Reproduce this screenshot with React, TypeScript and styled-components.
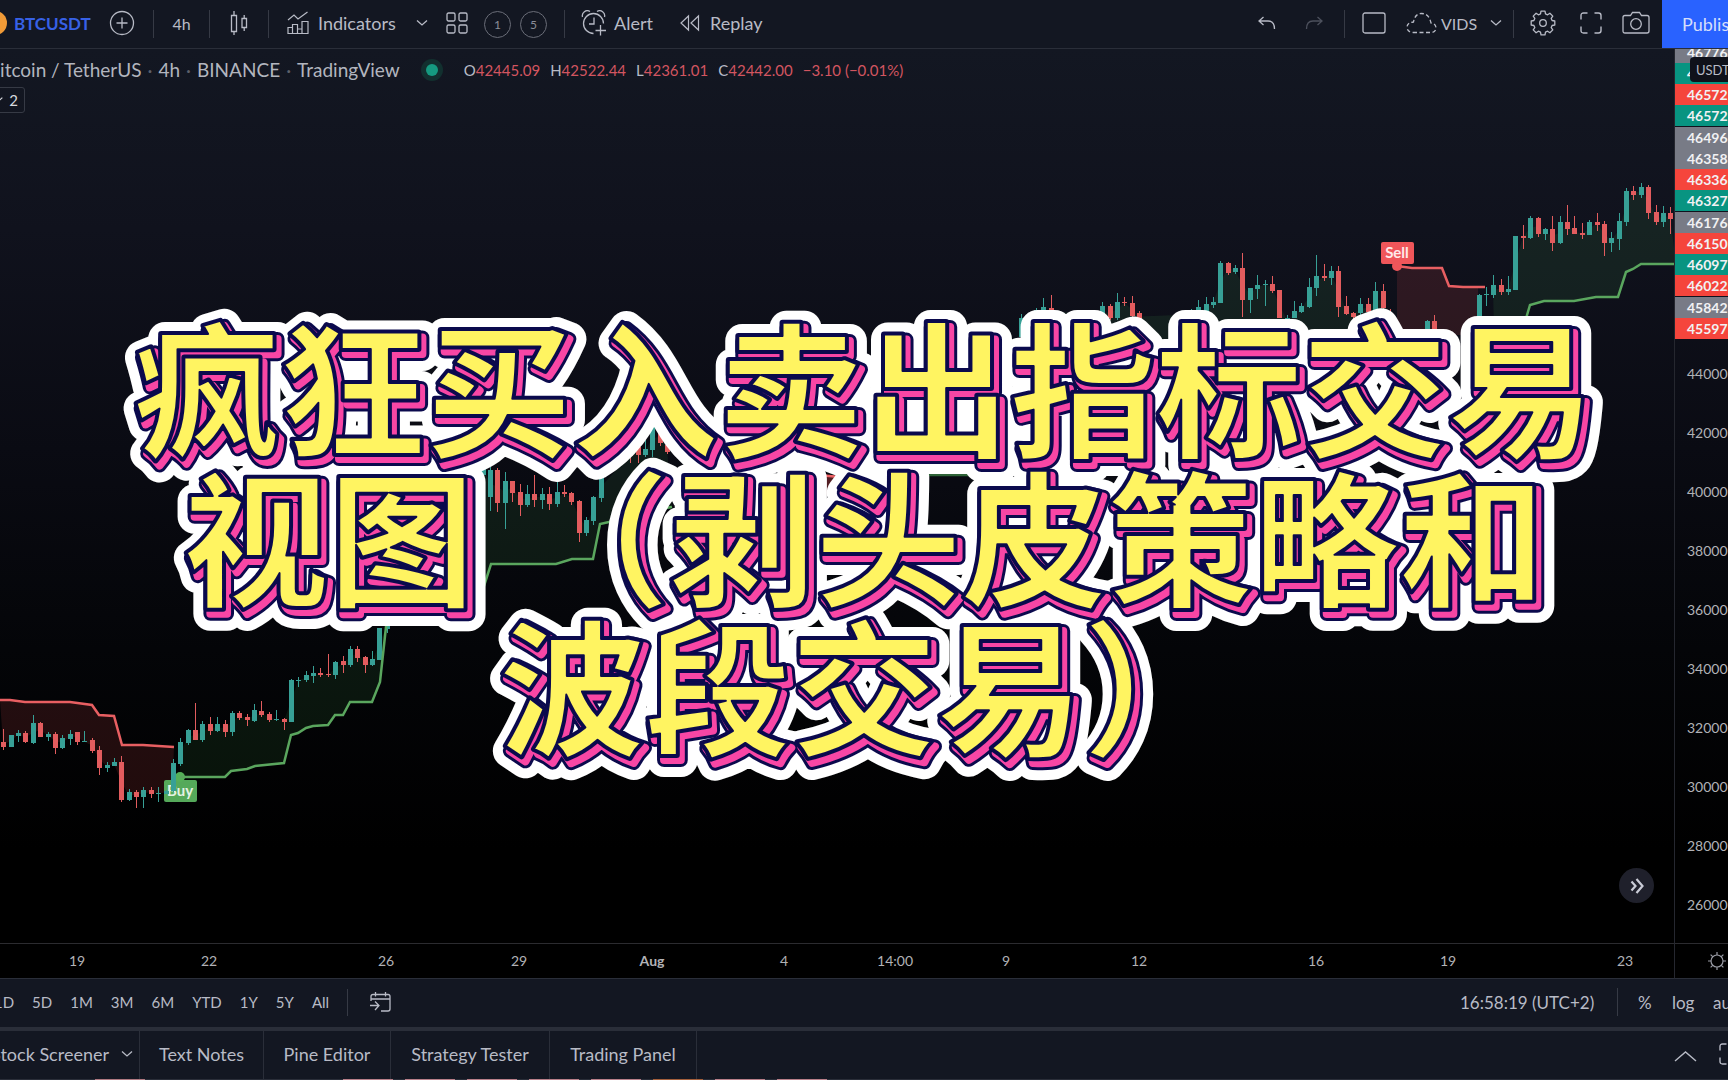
import React from "react";
import styled, { createGlobalStyle } from "styled-components";

const colors = {
  panel: "#131722",
  line: "#2a2e39",
  text: "#b8bbc6",
  dim: "#4c505c",
  up: "#37a096",
  down: "#e25c5e",
  blue: "#2962ff",
};

const GlobalStyle = createGlobalStyle`
  *, *::before, *::after { box-sizing: border-box; }
  html, body, #root { height: 100%; }
  body {
    margin: 0;
    overflow: hidden;
    background: #000;
    color: ${colors.text};
    font-family: Lato, "Open Sans", sans-serif;
    font-size: 16px;
  }
  button { font: inherit; color: inherit; background: none; border: 0; padding: 0; cursor: pointer; }
  ul, h1, p, dl, dd { margin: 0; padding: 0; list-style: none; }
`;

const Page = styled.div`
  position: relative;
  height: 100vh;
  display: flex;
  flex-direction: column;
  overflow: hidden;
`;

/* ---------- top toolbar ---------- */
const Toolbar = styled.header`
  flex: none;
  height: 49px;
  display: flex;
  justify-content: space-between;
  background: ${colors.panel};
  border-bottom: 1px solid ${colors.line};
  overflow: hidden;
`;
const ToolGroup = styled.div`
  display: flex;
  align-items: center;
  flex: none;
`;
const Tool = styled.button<{ $w: number; $start?: number; $gap?: number; $large?: boolean }>`
  flex: none;
  width: ${(p) => p.$w}px;
  height: 48px;
  && { padding-bottom: 2px; }
  padding-left: ${(p) => p.$start ?? 0}px;
  display: flex;
  align-items: center;
  justify-content: ${(p) => (p.$start === undefined ? "center" : "flex-start")};
  gap: ${(p) => p.$gap ?? 8}px;
  white-space: nowrap;
  font-size: ${(p) => (p.$large ? 18 : 16)}px;
  svg { flex: none; }
`;
const SymbolTool = styled(Tool)`
  color: #3761e6;
  font-weight: 700;
  font-size: 17px;
`;
const Coin = styled.span`
  flex: none;
  width: 24px;
  height: 24px;
  margin-left: -17px;
  border-radius: 50%;
  background: #f09a37;
`;
const Rule = styled.span<{ $h?: number }>`
  flex: none;
  width: 1px;
  height: ${(p) => p.$h ?? 28}px;
  background: #363a45;
`;
const Rounds = styled.div`
  display: flex;
  gap: 9px;
  padding: 0 17px 0 9px;
`;
const Round = styled.button`
  && { border: 1px solid #6a6d78; }
  width: 27px;
  height: 27px;
  border-radius: 50%;
  font-size: 12px;
  color: #8a8d98;
`;
const Publish = styled.button`
  && {
    background: ${colors.blue};
    color: #d5defb;
    padding-left: 20px;
  }
  width: 66px;
  height: 48px;
  overflow: hidden;
  text-align: left;
  white-space: nowrap;
  font-size: 18px;
`;

/* ---------- chart ---------- */
const Body = styled.main`
  flex: 1;
  min-height: 0;
  display: grid;
  grid-template-columns: minmax(0, 1fr) 54px;
  grid-template-rows: minmax(0, 1fr) 36px;
  background: linear-gradient(#131722 0, #10121d 180px, #0a0b13 400px, #040508 600px, #000 800px);
`;
const Pane = styled.section`
  position: relative;
  overflow: hidden;
`;
const ChartSvg = styled.svg`
  position: absolute;
  inset: 0;
  width: 100%;
  height: 100%;
`;
const Legend = styled.div`
  position: relative;
  display: flex;
  align-items: center;
  height: 42px;
  margin-left: -12px;
  white-space: nowrap;
`;
const LegendTitle = styled.p`
  display: flex;
  gap: 6px;
  padding-bottom: 2px;
  font-size: 19px;
  color: #b2b5be;
  i { font-style: normal; color: #5d606b; }
`;
const Status = styled.span`
  width: 12px;
  height: 12px;
  margin: 0 26px 0 26px;
  border-radius: 50%;
  background: #159a80;
  box-shadow: 0 0 0 5px #12302f;
`;
const Ohlc = styled.dl`
  display: flex;
  gap: 10px;
  font-size: 15px;
  div { display: flex; }
  dd { color: #d25560; }
`;
const Collapse = styled.button`
  && { border: 1px solid #363a45; padding: 0 6px 0 0; }
  position: relative;
  display: flex;
  align-items: center;
  justify-content: flex-end;
  gap: 6px;
  width: 34px;
  height: 26px;
  margin: -4px 0 0 -9px;
  border-radius: 3px;
  font-size: 15px;
  color: #d6d8de;
`;
const Jump = styled.button`
  && { background: #1f202b; }
  position: absolute;
  right: 20px;
  bottom: 40px;
  width: 35px;
  height: 35px;
  border-radius: 50%;
  display: grid;
  place-items: center;
`;
const PriceAxis = styled.aside`
  position: relative;
  overflow: hidden;
  border-left: 1px solid #25272f;
  font-size: 14px;
`;
const Badges = styled.ul`
  margin: -7px 0 5px -1px;
`;
const Badge = styled.li<{ $c: string; $split?: boolean }>`
  height: ${(p) => (p.$split ? 22 : 21)}px;
  border-top: ${(p) => (p.$split ? "1px solid #10121d" : "0")};
  padding-left: 13px;
  line-height: 21px;
  font-weight: 700;
  color: #f1f1f3;
  background: ${(p) => p.$c};
`;
const Tick = styled.li`
  height: 59px;
  padding-left: 12px;
  line-height: 59px;
  color: #b2b2b6;
`;
const Currency = styled.button`
  && { background: #0f111a; padding-left: 6px; }
  position: absolute;
  top: 8px;
  left: 15px;
  width: 52px;
  height: 25px;
  border-radius: 4px;
  text-align: left;
  font-size: 13px;
`;
const TimeAxis = styled.ul`
  display: flex;
  align-items: center;
  overflow: hidden;
  && { padding-bottom: 2px; }
  border-top: 1px solid #2b2b2f;
  border-bottom: 1px solid ${colors.line};
  font-size: 14px;
  color: #b2b2b6;
`;
const Time = styled.li<{ $gap: number; $bold?: boolean }>`
  flex: none;
  display: flex;
  justify-content: center;
  width: 0;
  margin-left: ${(p) => p.$gap}px;
  white-space: nowrap;
  font-weight: ${(p) => (p.$bold ? 700 : 400)};
`;
const Corner = styled.button`
  && {
    border-left: 1px solid #25272f;
    border-top: 1px solid #2b2b2f;
    border-bottom: 1px solid ${colors.line};
    padding-left: 32px;
  }
  overflow: hidden;
  display: flex;
  align-items: center;
`;

/* ---------- bottom bars ---------- */
const RangeBar = styled.footer`
  flex: none;
  height: 48px;
  padding-bottom: 2px;
  display: flex;
  justify-content: space-between;
  align-items: center;
  background: ${colors.panel};
  overflow: hidden;
`;
const Ranges = styled.div`
  display: flex;
  align-items: center;
  gap: 18px;
  margin-left: -6px;
  font-size: 15px;
`;
const CalendarButton = styled.button`
  display: flex;
  margin-left: 3px;
`;
const ScaleGroup = styled.div`
  display: flex;
  align-items: center;
  font-size: 17px;
`;
const ScaleButton = styled.button<{ $w: number }>`
  width: ${(p) => p.$w}px;
  overflow: hidden;
  text-align: left;
  white-space: nowrap;
`;
const Tabs = styled.nav`
  flex: none;
  height: 52px;
  display: flex;
  align-items: center;
  justify-content: space-between;
  border-top: 4px solid ${colors.line};
  background: ${colors.panel};
  overflow: hidden;
`;
const TabList = styled.div`
  display: flex;
`;
const Tab = styled.button<{ $w: number }>`
  && { border-right: 1px solid ${colors.line}; padding-bottom: 2px; }
  display: flex;
  align-items: center;
  justify-content: center;
  gap: 12px;
  width: ${(p) => p.$w}px;
  height: 48px;
  white-space: nowrap;
  font-size: 18px;
  svg { flex: none; }
`;
const FirstTab = styled(Tab)`
  justify-content: flex-end;
  && { padding-right: 6px; }
`;
const PanelButtons = styled.div`
  display: flex;
  align-items: center;
  gap: 22px;
  width: 54px;
`;
const Strip = styled.div`
  flex: none;
  display: flex;
  gap: 12px;
  height: 1px;
  padding-left: 95px;
  background: ${colors.line};
`;
const Sliver = styled.span<{ $c: string; $after?: number }>`
  width: 50px;
  margin-right: ${(p) => p.$after ?? 0}px;
  background: ${(p) => p.$c};
`;

/* ---------- headline ---------- */
const Headline = styled.h1`
  position: absolute;
  inset: 0;
  pointer-events: none;
  svg { display: block; width: 100%; height: 100%; }
  text {
    font-family: "Noto Sans CJK SC", sans-serif;
    font-size: 146px;
    font-weight: 700;
    text-anchor: middle;
  }
`;

/* ---------- icons ---------- */
type IconProps = { w: number; h?: number; color?: string; sw?: number; children: React.ReactNode };
const Icon = ({ w, h = w, color = "currentColor", sw = 1, children }: IconProps) => (
  <svg width={w} height={h} viewBox={`0 0 ${w} ${h}`} fill="none" stroke={color} strokeWidth={sw} aria-hidden="true">
    {children}
  </svg>
);
const Chevron = () => (
  <Icon w={12} h={8} sw={1.3}><path d="M1 1.5l5 4.5 5-4.5" /></Icon>
);
const Corners = () => (
  <Icon w={22} sw={1.4}>
    <path d="M1 7.500V3.500Q1 1 3.500 1H7.500M14.500 1h4Q21 1 21 3.500V7.500M21 14.500v4Q21 21 18.500 21H14.500M7.500 21H3.500Q1 21 1 18.500V14.500" />
  </Icon>
);
const gearPath = (() => {
  const pts: string[] = [];
  for (let i = 0; i < 8; i++) {
    const a = (i * Math.PI) / 4 - Math.PI / 2;
    [[-0.27, 9.4], [-0.17, 12], [0.17, 12], [0.27, 9.4]].forEach(([d, r]) =>
      pts.push(`${(13 + r * Math.cos(a + d)).toFixed(1)} ${(13 + r * Math.sin(a + d)).toFixed(1)}`)
    );
  }
  return `M${pts.join("L")}Z`;
})();

/* ---------- chart data: bar, high, body top, body bottom, low, direction ---------- */
type Bar = [number, number, number, number, number, number];
const bars: Bar[] = [
  [0,729,742,747,750,0],[1,735,735,747,747,1],[2,730,733,736,742,1],[3,731,733,742,743,0],[4,715,723,743,744,1],
  [5,722,723,737,737,0],[6,732,734,737,741,1],[7,732,734,748,754,0],[8,735,738,748,749,1],[9,730,734,739,745,1],
  [10,732,732,742,745,0],[11,731,741,742,742,1],[12,738,740,751,753,0],[13,746,750,768,775,0],[14,762,765,768,772,1],
  [15,758,762,766,766,1],[16,756,762,800,802,0],[17,789,792,800,801,1],[18,790,792,797,808,0],[19,787,790,797,808,1],
  [20,787,790,794,798,0],[21,787,793,794,802,1],[22,790,791,794,794,1],[23,759,763,791,792,1],[24,738,742,764,766,1],
  [25,729,730,743,745,1],[26,703,730,740,740,0],[27,721,724,740,742,1],[28,717,724,731,735,0],[29,717,724,731,732,1],
  [30,720,724,732,737,0],[31,711,713,732,736,1],[32,711,713,718,720,0],[33,714,717,720,726,0],[34,704,710,721,722,1],
  [35,701,711,715,717,0],[36,712,714,720,722,0],[37,710,719,720,721,1],[38,718,719,722,730,0],[39,679,680,722,722,1],
  [40,677,680,681,687,1],[41,671,675,680,682,1],[42,666,673,676,683,1],[43,668,673,675,677,0],[44,654,674,675,677,0],
  [45,661,662,675,679,1],[46,656,661,665,673,0],[47,646,649,665,667,1],[48,646,649,658,662,0],[49,656,657,665,673,0],
  [50,651,659,665,666,1],[51,628,628,660,660,1],[52,600,622,629,633,1],
  [65,455,460,475,490,1],[66,467,470,497,511,1],[67,468,470,503,512,0],[68,472,481,503,529,1],[69,481,481,493,502,0],[70,484,492,505,516,0],
  [71,485,494,505,507,1],[72,475,494,500,507,0],[73,488,494,500,509,1],[74,487,494,504,510,0],[75,482,492,504,507,1],
  [76,485,492,494,497,0],[77,492,493,502,505,0],[78,500,501,533,542,0],[79,517,520,533,536,1],[80,496,497,521,525,1],
  [81,473,475,498,502,1],[85,447,455,456,463,0],[86,445,447,455,463,0],[87,440,449,455,457,1],[88,426,427,450,457,1],
  [89,428,430,443,446,0],[90,440,445,452,454,0],
  [138,314,318,337,337,1],[139,314,317,325,326,1],[140,308,310,322,322,1],[141,298,307,315,317,1],[142,295,308,316,317,0],
  [149,302,306,320,322,1],[150,304,306,318,320,0],[151,293,302,318,320,1],[152,297,302,303,306,0],[153,296,303,316,318,0],
  [154,311,313,320,322,0],[161,309,311,318,320,1],[162,300,307,318,320,1],[163,297,304,312,316,1],[164,297,302,305,308,1],
  [165,261,263,303,303,1],[166,262,263,273,275,0],[167,265,268,272,274,1],[168,253,268,300,317,0],[169,288,288,300,313,1],
  [170,275,285,289,299,1],[171,280,284,285,306,1],[172,276,284,291,293,0],[173,290,290,318,318,0],[174,315,318,322,324,1],
  [175,301,311,318,318,1],[176,303,306,312,313,1],[177,278,287,307,308,1],[178,255,276,288,296,1],[179,264,276,278,281,0],
  [180,266,271,278,285,1],[181,266,271,307,317,0],[182,296,306,314,315,0],[183,312,313,317,320,0],[184,298,304,313,315,1],
  [185,298,304,312,315,0],[186,282,291,311,315,1],[187,284,291,308,310,0],[188,309,315,322,324,0],
  [193,320,321,330,332,1],[194,315,321,330,332,0],
  [200,294,295,318,320,1],[201,287,294,295,306,1],[202,275,285,295,298,1],[203,279,285,292,295,0],[204,276,289,292,295,1],
  [205,236,236,290,290,1],[206,225,236,238,249,0],[207,216,218,238,239,1],[208,217,218,234,237,0],[209,228,229,234,240,1],
  [210,216,229,243,251,0],[211,216,222,243,244,1],[212,205,222,229,235,0],[213,216,228,234,234,0],[214,223,233,235,239,0],
  [215,220,222,235,235,1],[216,213,222,225,231,0],[217,221,224,243,256,0],[218,232,238,243,252,1],[219,213,221,239,250,1],
  [220,188,191,222,226,1],[221,186,191,195,200,0],[222,183,187,195,198,1],[223,185,187,213,219,0],[224,205,212,222,225,0],
  [225,206,213,222,227,1],[226,207,213,219,234,0],
];
const barX = (i: number) => Math.round(3.3 + i * 7.376);

type Pt = [number, number];
type Trail = { up: boolean; from: number; to: number; pts: Pt[]; hidden?: boolean };
const trails: Trail[] = [
  { up: false, from: 0, to: 23, pts: [[0,700],[10,700],[25,702],[70,702],[92,705],[99,715],[114,716],[122,745],[143,745],[174,747]] },
  { up: true, from: 24, to: 52, pts: [[180,777],[225,777],[231,771],[247,769],[255,766],[284,763],[291,735],[298,733],[306,728],[313,726],[328,725],[335,715],[343,715],[350,702],[372,702],[380,682],[386,627],[388,610]] },
  { up: true, from: 65, to: 90, pts: [[484,586],[491,564],[556,564],[572,559],[593,559],[600,524],[609,522],[640,512],[672,507]] },
  { up: true, from: 138, to: 188, hidden: true, pts: [[1021,340],[1390,340]] },
  { up: true, from: 202, to: 226, pts: [[1494,330],[1525,322],[1530,305],[1544,301],[1574,301],[1596,297],[1618,297],[1626,272],[1633,269],[1641,264],[1676,264]] },
];
const toPoints = (pts: Pt[]) => pts.map((p) => p.join(",")).join(" ");
const fillPoints = (t: Trail) => {
  const mids = bars
    .filter(([i]) => i >= t.from && i <= t.to)
    .map(([i, , a, b]): Pt => [barX(i), (a + b) / 2]);
  return toPoints([...t.pts, ...mids.reverse()]);
};

const Chart = () => (
  <ChartSvg role="img" aria-label="BTCUSDT 4h candles">
    <g transform="translate(0 -49)">
      {trails.map((t) => (
        <polygon key={`f${t.from}`} points={fillPoints(t)} fill={t.up ? "#4caf50" : "#ff5252"} opacity={t.up ? 0.11 : 0.13} />
      ))}
      <polygon points="1397,266 1412,268 1442,268 1449,286 1463,287 1478,287 1478,335 1397,335" fill="#ff5252" opacity={0.13} />
      <polygon points="820,474 840,478 822,500" fill="#ff5252" opacity={0.3} />
      <rect x="164" y="780" width="33" height="22" rx="2" fill="#55a95a" />
      <circle cx="180" cy="777" r="5" fill="#55b058" />
      <text x="180" y="796" textAnchor="middle" fontSize="15" fontWeight="700" fill="#e4f2e4">Buy</text>
      {bars.map(([i, hi, top, bot, lo, up]) => (
        <g key={i} fill={up ? colors.up : colors.down}>
          <rect x={barX(i)} y={hi} width="1" height={Math.max(1, lo - hi)} />
          <rect x={barX(i) - 2} y={top} width="5" height={Math.max(1, bot - top)} />
        </g>
      ))}
      <g fill="none" strokeWidth="2.500">
        {trails.filter((t) => !t.hidden).map((t) => (
          <polyline key={`l${t.from}`} points={toPoints(t.up && t.from === 202 ? t.pts.slice(1) : t.pts)} stroke={t.up ? "#5aa65e" : "#e85f62"} />
        ))}
        <polyline points="1397,266 1412,268 1442,268 1449,286 1463,287 1485,287" stroke="#e85f62" />
        <polyline points="710,423 722,424" stroke="#ee6164" />
        <polyline points="818,475 840,477" stroke="#ee6164" />
        <polyline points="925,475 980,475" stroke="#2f6337" />
      </g>
      <rect x="1381" y="242" width="33" height="22" rx="2" fill="#f0565a" />
      <circle cx="1397" cy="266" r="5" fill="#f0565a" />
      <text x="1397" y="258" textAnchor="middle" fontSize="15" fontWeight="700" fill="#ffe9e9">Sell</text>
    </g>
  </ChartSvg>
);

const GREY = "#787b86";
const RED = "#f5453c";
const GREEN = "#089481";
const badges: [string, string, boolean?][] = [
  ["46776", GREY], ["46600", GREEN], ["46572", RED], ["46572", GREEN], ["46496", GREY, true], ["46358", GREY],
  ["46336", RED], ["46327", GREEN], ["46176", GREY, true], ["46150", RED], ["46097", GREEN], ["46022", RED],
  ["45842", GREY, true], ["45597", RED],
];
const ticks = [44000, 42000, 40000, 38000, 36000, 34000, 32000, 30000, 28000, 26000];
const times: [string, number][] = [
  ["19", 77], ["22", 132], ["26", 177], ["29", 133], ["Aug", 133], ["4", 132], ["14:00", 111], ["9", 111],
  ["12", 133], ["16", 177], ["19", 132], ["23", 177],
];
const ohlc = [["O", "42445.09"], ["H", "42522.44"], ["L", "42361.01"], ["C", "42442.00"]];
const lines = ["疯狂买入卖出指标交易", "视图\u2004（剥头皮策略和", "波段交易）"];

export default function App() {
  return (
    <>
      <GlobalStyle />
      <Page>
        <Toolbar>
          <ToolGroup>
            <SymbolTool $w={101} $start={0} $gap={7}><Coin />BTCUSDT</SymbolTool>
            <Tool $w={42} aria-label="Compare">
              <Icon w={26} sw={1.3}><circle cx="13" cy="13" r="11.500" /><path d="M13 7.500v11M7.500 13h11" /></Icon>
            </Tool>
            <Tool as="span" $w={10} />
            <Rule />
            <Tool $w={55}>4h</Tool>
            <Rule />
            <Tool $w={58} aria-label="Candles">
              <Icon w={18} h={26} sw={1.3}>
                <path d="M1.500 5.500h5v16h-5zM4 1v4.500M4 21.500V25M12 8.500h4.500v9H12zM14.200 5v3.500M14.200 17.500V21" />
              </Icon>
            </Tool>
            <Rule />
            <Tool $w={136} $start={18} $gap={9} $large>
              <Icon w={22} h={24} sw={1.2}>
                <path d="M1 9l6-5 4 4 9.500-7M1 22.500v-6h4.500v6zM5.500 22.500v-9h5v9M10.500 18h4.500v4.500M15 22.500V10.500h6v12H1" />
              </Icon>
              Indicators
            </Tool>
            <Tool $w={33} aria-label="More indicators"><Chevron /></Tool>
            <Tool $w={37} aria-label="Layouts">
              <Icon w={22} sw={1.3}>
                <rect x="1" y="1" width="8" height="8" rx="1.500" /><rect x="13" y="1" width="8" height="8" rx="1.500" />
                <rect x="1" y="13" width="8" height="8" rx="1.500" /><rect x="13" y="13" width="8" height="8" rx="1.500" />
              </Icon>
            </Tool>
            <Rounds><Round>1</Round><Round>5</Round></Rounds>
            <Rule />
            <Tool $w={97} $start={16} $gap={8} $large>
              <Icon w={25} h={26} sw={1.3}>
                <path d="M12.500 23.500a10 10 0 1 1 10-10M13 7.500V14H8M1.500 7A5 5 0 0 1 9 1.500M16 1.500A5 5 0 0 1 23.500 7M19.500 15v10.500M14.500 20.500h10.500" />
              </Icon>
              Alert
            </Tool>
            <Tool $w={110} $start={18} $gap={10} $large>
              <Icon w={20} h={18} sw={1.2}><path d="M8.500 2v14L1 9zM18.500 2v14L11 9z" /></Icon>
              Replay
            </Tool>
          </ToolGroup>
          <ToolGroup>
            <Tool $w={46} aria-label="Undo">
              <Icon w={18} h={14} sw={1.3}><path d="M5.500 1L1 5l4.500 4M1 5h9q6.500 0 6.500 8" /></Icon>
            </Tool>
            <Tool $w={48} aria-label="Redo">
              <Icon w={18} h={14} sw={1.3} color={colors.dim}><path d="M12.500 1L17 5l-4.500 4M17 5H8q-6.500 0-6.500 8" /></Icon>
            </Tool>
            <Tool as="span" $w={6} />
            <Rule />
            <Tool $w={58} aria-label="Select layout">
              <Icon w={24} h={22} sw={1.3}><rect x="1" y="1" width="22" height="20" rx="2" /></Icon>
            </Tool>
            <Tool $w={80} $start={3} $gap={4}>
              <Icon w={31} h={22} sw={1.3}>
                <path strokeDasharray="4 2.500" d="M7 20.500h19q4-1 4-5-.500-4-5-4.500Q23 1.500 15.500 1.500 9 1.500 7.500 10 1 10.500 1 15.500 1.500 20 7 20.500z" />
              </Icon>
              VIDS
            </Tool>
            <Tool $w={26} aria-label="Layout menu"><Chevron /></Tool>
            <Tool as="span" $w={4} />
            <Rule />
            <Tool $w={57} aria-label="Settings">
              <Icon w={26} sw={1.3}><path d={gearPath} strokeLinejoin="round" /><circle cx="13" cy="13" r="3.300" /></Icon>
            </Tool>
            <Tool $w={39} aria-label="Fullscreen"><Corners /></Tool>
            <Tool $w={52} aria-label="Snapshot">
              <Icon w={28} h={24} sw={1.3}>
                <path d="M3 4.500h5.500l2-3h7l2 3H25q2 0 2 2v13.500q0 2-2 2H3q-2 0-2-2V6.500q0-2 2-2z" /><circle cx="14" cy="13" r="5.300" />
              </Icon>
            </Tool>
            <Publish>Publish</Publish>
          </ToolGroup>
        </Toolbar>

        <Body>
          <Pane>
            <Chart />
            <Legend>
              <LegendTitle>
                <span>Bitcoin / TetherUS</span><i>·</i><span>4h</span><i>·</i><span>BINANCE</span><i>·</i><span>TradingView</span>
              </LegendTitle>
              <Status />
              <Ohlc>
                {ohlc.map(([k, v]) => (
                  <div key={k}><dt>{k}</dt><dd>{v}</dd></div>
                ))}
                <div><dd>−3.10 (−0.01%)</dd></div>
              </Ohlc>
            </Legend>
            <Collapse aria-label="Show 2 indicators"><Chevron />2</Collapse>
            <Jump aria-label="Scroll to latest bar">
              <Icon w={14} h={16} sw={2.2} color="#c9cbd6"><path d="M1.500 3.500L5.500 8l-4 4.500M6.500 1l6 7-6 7" /></Icon>
            </Jump>
          </Pane>
          <PriceAxis>
            <Badges>
              {badges.map(([v, c, split], i) => (
                <Badge key={i} $c={c} $split={split}>{v}</Badge>
              ))}
            </Badges>
            <ul>{ticks.map((t) => <Tick key={t}>{t}</Tick>)}</ul>
            <Currency>USDT</Currency>
          </PriceAxis>
          <TimeAxis>
            {times.map(([label, gap], i) => (
              <Time key={i} $gap={gap} $bold={label === "Aug"}>{label}</Time>
            ))}
          </TimeAxis>
          <Corner aria-label="Scale settings">
            <Icon w={20} color="#9a9ca5" sw={1.2}>
              <circle cx="10" cy="10" r="6" />
              <path d="M10 1v3M10 16v3M1 10h3M16 10h3M3.600 3.600l2.100 2.100M14.300 14.300l2.100 2.100M3.600 16.400l2.100-2.100M14.300 5.700l2.100-2.100" />
            </Icon>
          </Corner>
        </Body>

        <RangeBar>
          <Ranges>
            {["1D", "5D", "1M", "3M", "6M", "YTD", "1Y", "5Y", "All"].map((r) => <button key={r}>{r}</button>)}
            <Rule $h={27} />
            <CalendarButton aria-label="Go to date">
              <Icon w={22} h={20} sw={1.3}>
                <path d="M2 9V4.500Q2 2.500 4 2.500h15q2 0 2 2V17q0 2-2 2h-7M2 7h19M6.500 0v4.500M16.500 0v4.500M1 13.500h8.500M6 9.500l4 4-4 4.500" />
              </Icon>
            </CalendarButton>
          </Ranges>
          <ScaleGroup>
            <ScaleButton $w={157}>16:58:19 (UTC+2)</ScaleButton>
            <Rule $h={28} />
            <Tool as="span" $w={20} />
            <ScaleButton $w={34}>%</ScaleButton>
            <ScaleButton $w={41}>log</ScaleButton>
            <ScaleButton $w={15}>auto</ScaleButton>
          </ScaleGroup>
        </RangeBar>
        <Tabs>
          <TabList>
            <FirstTab $w={140}>Stock Screener<Chevron /></FirstTab>
            <Tab $w={124}>Text Notes</Tab>
            <Tab $w={127}>Pine Editor</Tab>
            <Tab $w={159}>Strategy Tester</Tab>
            <Tab $w={147}>Trading Panel</Tab>
          </TabList>
          <PanelButtons>
            <button aria-label="Open panel"><Icon w={23} h={12} sw={1.4}><path d="M1 11L11.500 2 22 11" /></Icon></button>
            <button aria-label="Maximize panel"><Corners /></button>
          </PanelButtons>
        </Tabs>
        <Strip>
          <Sliver $c="#b07a82" $after={186} />
          {["#b9808a", "#b9808a", "#b9808a", "#b9808a", "#b9808a", "#a5603c", "#b9808a", "#b9808a"].map((c, i) => (
            <Sliver key={i} $c={c} />
          ))}
        </Strip>

        <Headline>
          <svg>
            <g strokeLinejoin="round">
              <use href="#headline" x="4" y="5" stroke="#fff" strokeWidth="34" />
              <use href="#headline" x="4" y="5" stroke="#0b0a4d" strokeWidth="14" />
              <use href="#headline" x="4" y="5" fill="#f846a5" stroke="#f846a5" strokeWidth="8" />
              <use href="#headline" stroke="#0b0a4d" strokeWidth="6" />
              <g fill="#fff461" stroke="#0b0a4d" strokeWidth="2">
                <text id="headline">
                  {lines.map((l, i) => <tspan key={l} x="50%" y={446 + i * 149}>{l}</tspan>)}
                </text>
              </g>
            </g>
          </svg>
        </Headline>
      </Page>
    </>
  );
}
